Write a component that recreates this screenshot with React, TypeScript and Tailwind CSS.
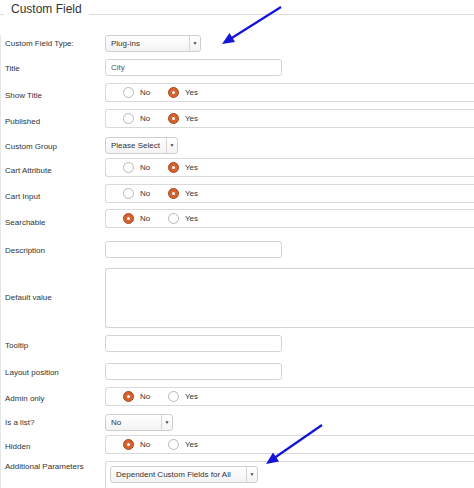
import React from 'react';

const font = { fontFamily: '"Liberation Sans", Arial, sans-serif' };

function Row({ label, mt, pt, children }: { label: string; mt: string; pt: string; children: React.ReactNode }) {
  return (
    <div className={`flex ${mt}`}>
      <div className={`w-[104px] shrink-0 pl-[4px] text-[8px] leading-[10px] text-[#333] ${pt}`}>{label}</div>
      {children}
    </div>
  );
}

function Radio({ checked, text }: { checked: boolean; text: string }) {
  return (
    <div className="flex items-center">
      {checked ? (
        <span className="flex h-[11px] w-[11px] items-center justify-center rounded-full border border-[#a9481f] bg-[#d4632f]">
          <span className="h-[3px] w-[3px] rounded-full bg-white" />
        </span>
      ) : (
        <span className="h-[11px] w-[11px] rounded-full border border-[#b8b8b8] bg-white" />
      )}
      <span className="ml-[6px] text-[8px] text-[#333]">{text}</span>
    </div>
  );
}

function RadioBox({ yes }: { yes: boolean }) {
  return (
    <div className="flex h-[19px] flex-1 items-center rounded-l-[3px] border border-r-0 border-[#d9d9d9] pl-[17px]">
      <div className="w-[45px]">
        <Radio checked={!yes} text="No" />
      </div>
      <Radio checked={yes} text="Yes" />
    </div>
  );
}

function Select({ w, text }: { w: string; text: string }) {
  return (
    <div className={`flex h-[17px] ${w} rounded-[3px] border border-[#cfcfcf] bg-gradient-to-b from-white to-[#f3f3f3]`}>
      <div className="flex flex-1 items-center pl-[5px] text-[8px] text-[#333]">{text}</div>
      <div className="flex w-[11px] items-center justify-center border-l border-[#d6d6d6]">
        <span className="text-[5px] leading-none text-[#444]">▼</span>
      </div>
    </div>
  );
}

function Input({ text }: { text?: string }) {
  return (
    <div className="flex h-[17px] w-[177px] items-center rounded-[3px] border border-[#d4d4d4] bg-white pl-[5px] text-[8px] text-[#555]">
      {text}
    </div>
  );
}

export default function App() {
  return (
    <div className="relative h-[488px] w-[474px] overflow-hidden bg-white" style={font}>
      {/* legend line */}
      <div className="flex h-[15px]">
        <div className="mt-[14px] w-[4px] border-t border-[#dcdcdc]" />
        <div className="px-[7px] pt-[1px] text-[12px] leading-[16px] text-[#333]">Custom Field</div>
        <div className="mt-[14px] flex-1 border-t border-[#dcdcdc]" />
      </div>

      <div className="h-[473px] border-l border-[#e6e6e6]">
        <Row label="Custom Field Type:" mt="mt-[20px]" pt="pt-[4px]">
          <Select w="w-[96px]" text="Plug-ins" />
        </Row>
        <Row label="Title" mt="mt-[7px]" pt="pt-[5px]">
          <Input text="City" />
        </Row>
        <Row label="Show Title" mt="mt-[7px]" pt="pt-[8px]">
          <RadioBox yes />
        </Row>
        <Row label="Published" mt="mt-[7px]" pt="pt-[8px]">
          <RadioBox yes />
        </Row>
        <Row label="Custom Group" mt="mt-[9px]" pt="pt-[5px]">
          <Select w="w-[73px]" text="Please Select" />
        </Row>
        <Row label="Cart Attribute" mt="mt-[4px]" pt="pt-[8px]">
          <RadioBox yes />
        </Row>
        <Row label="Cart Input" mt="mt-[7px]" pt="pt-[8px]">
          <RadioBox yes />
        </Row>
        <Row label="Searchable" mt="mt-[6px]" pt="pt-[9px]">
          <RadioBox yes={false} />
        </Row>
        <Row label="Description" mt="mt-[13px]" pt="pt-[5px]">
          <Input />
        </Row>
        <Row label="Default value" mt="mt-[10px]" pt="pt-[25px]">
          <div className="h-[60px] flex-1 rounded-l-[3px] border border-r-0 border-[#d4d4d4]" />
        </Row>
        <Row label="Tooltip" mt="mt-[7px]" pt="pt-[6px]">
          <Input />
        </Row>
        <Row label="Layout position" mt="mt-[11px]" pt="pt-[5px]">
          <Input />
        </Row>
        <Row label="Admin only" mt="mt-[7px]" pt="pt-[7px]">
          <RadioBox yes={false} />
        </Row>
        <Row label="Is a list?" mt="mt-[8px]" pt="pt-[4px]">
          <Select w="w-[68px]" text="No" />
        </Row>
        <Row label="Hidden" mt="mt-[4px]" pt="pt-[7px]">
          <RadioBox yes={false} />
        </Row>
        <Row label="Additional Parameters" mt="mt-[7px]" pt="pt-[1px]">
          <div className="h-[40px] flex-1 rounded-l-[3px] border border-r-0 border-[#d9d9d9] pl-[4px] pt-[4px]">
            <Select w="w-[148px]" text="Dependent Custom Fields for All" />
          </div>
        </Row>
      </div>

      {/* annotation arrows */}
      <svg className="pointer-events-none absolute left-0 top-0" width="474" height="488" viewBox="0 0 474 488">
        <line x1="281" y1="7" x2="231" y2="38.5" stroke="#1414d9" strokeWidth="2.2" />
        <polygon points="222,44 235,42 229.5,33" fill="#1414d9" />
        <line x1="322" y1="425" x2="275" y2="457.5" stroke="#1414d9" strokeWidth="2.2" />
        <polygon points="266,464 279,461.5 273,452.5" fill="#1414d9" />
      </svg>
    </div>
  );
}
